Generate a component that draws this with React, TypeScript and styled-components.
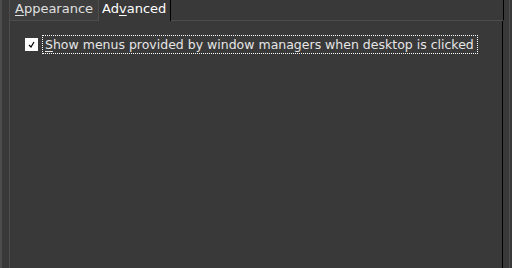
import styled, { createGlobalStyle } from 'styled-components'

const GlobalStyle = createGlobalStyle`
  html, body {
    margin: 0;
    padding: 0;
    background: #393939;
  }
  body {
    font-family: 'DejaVu Sans', 'Liberation Sans', sans-serif;
    font-size: 12.5px;
    color: #e6e6e6;
  }
`

const Frame = styled.div`
  width: 512px;
  height: 268px;
  box-sizing: border-box;
  display: flex;
  background: #393939;
  border-left: 2px solid #4d4d4d;
  overflow: hidden;
`

const Gutter = styled.div<{ $w: number }>`
  width: ${({ $w }) => $w}px;
  flex: none;
`

const RightEdge = styled.div`
  width: 9px;
  flex: none;
  display: flex;
  justify-content: flex-end;
  padding-right: 2px;
  box-sizing: border-box;
  &::after {
    content: '';
    width: 1px;
    background: #4d4d4d;
  }
`

const Notebook = styled.div`
  flex: 1;
  display: flex;
  flex-direction: column;
`

const TabStrip = styled.div`
  height: 21px;
  display: flex;
  align-items: stretch;
  box-sizing: border-box;
`

const Tab = styled.div<{ $active?: boolean }>`
  display: flex;
  align-items: center;
  box-sizing: border-box;
  white-space: nowrap;
  font-size: 13px;
  background: ${({ $active }) => ($active ? '#393939' : '#3e3e3e')};
  border-left: 1px solid #4d4d4d;
  border-bottom: ${({ $active }) => ($active ? 'none' : '1px solid #4d4d4d')};
  border-right: ${({ $active }) => ($active ? '1px solid #000' : 'none')};
  color: ${({ $active }) => ($active ? '#ffffff' : '#e0e0e0')};
  padding: 0 ${({ $active }) => ($active ? '4px' : '5px')}
    ${({ $active }) => ($active ? '4px' : '3px')}
    ${({ $active }) => ($active ? '3px' : '5px')};
`

const StripRest = styled.div`
  flex: 1;
  border-bottom: 1px solid #4d4d4d;
  border-right: 1px solid #000;
  margin-right: -1px;
`

const Mnemonic = styled.span`
  text-decoration: underline;
  text-underline-offset: 2px;
`

const Page = styled.div`
  flex: 1;
  border-left: 1px solid #4d4d4d;
  border-right: 1px solid #000;
  padding: 15px 0 0 15px;
`

const CheckRow = styled.label`
  display: flex;
  align-items: center;
  gap: 5px;
`

const Box = styled.span`
  width: 13px;
  height: 13px;
  flex: none;
  background: #ffffff;
  display: flex;
  align-items: center;
  justify-content: center;
`

const Label = styled.span`
  outline: 1px dotted #ffffff;
  outline-offset: 0;
  padding: 1px 3px 1px 2px;
  line-height: 15px;
  white-space: nowrap;
`

export default function App() {
  return (
    <>
      <GlobalStyle />
      <Frame>
        <Gutter $w={7} />
        <Notebook>
          <TabStrip>
            <Tab>
              <span>
                <Mnemonic>A</Mnemonic>ppearance
              </span>
            </Tab>
            <Tab $active>
              <span>
                Ad<Mnemonic>v</Mnemonic>anced
              </span>
            </Tab>
            <StripRest />
          </TabStrip>
          <Page>
            <CheckRow>
              <Box>
                <svg width="9" height="9" viewBox="0 0 9 9">
                  <path d="M2 5 L4 7 L7 2" fill="none" stroke="#000" strokeWidth="1.2" />
                </svg>
              </Box>
              <Label>
                <Mnemonic>S</Mnemonic>how menus provided by window managers when desktop is clicked
              </Label>
            </CheckRow>
          </Page>
        </Notebook>
        <RightEdge />
      </Frame>
    </>
  )
}
